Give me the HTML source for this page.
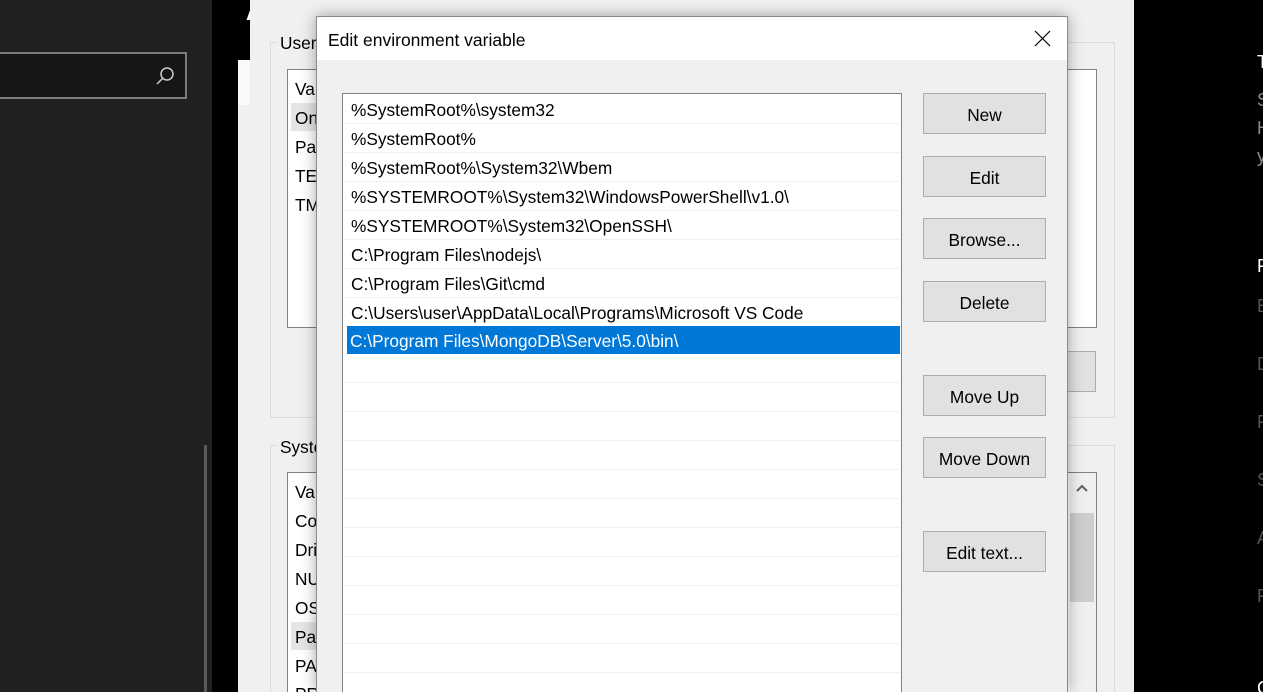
<!DOCTYPE html>
<html><head><meta charset="utf-8"><style>
*{margin:0;padding:0;box-sizing:border-box}
html,body{width:1263px;height:692px;overflow:hidden}
body{background:#000;font-family:"Liberation Sans",sans-serif;position:relative}
.a{position:absolute}
.t{position:absolute;font-size:17.3px;color:#000;white-space:nowrap;line-height:20px}
.btn{position:absolute;left:923px;width:123px;height:41px;background:#e1e1e1;border:1px solid #adadad;font-size:17.3px;text-align:center;line-height:42px;color:#000}
.row{position:absolute;left:344px;width:556px;height:29px;border-bottom:1px solid #f0f0f0;font-size:17.3px;line-height:31px;padding-left:7px;white-space:nowrap;color:#000}
.g{position:absolute;left:1257px;font-size:18px;color:#8a8a8a;white-space:nowrap}
</style></head><body>
<div class="a" style="left:0;top:0;width:212px;height:692px;background:#202020"></div>
<div class="a" style="left:-4px;top:52px;width:191px;height:47px;border:2px solid #7b7b7b;background:#161616"></div>
<svg class="a" style="left:154px;top:64px" width="24" height="24"><circle cx="13" cy="10" r="6" fill="none" stroke="#ccc" stroke-width="1.5"/><line x1="9" y1="14" x2="3" y2="20" stroke="#ccc" stroke-width="1.5"/></svg>
<div class="a" style="left:204px;top:445px;width:3px;height:247px;background:#5a5a5a"></div>
<div class="a" style="left:246px;top:0;font-size:22px;color:#fff;font-weight:bold">A</div>
<div class="a" style="left:250px;top:0;width:884px;height:692px;background:#f0f0f0"></div>
<div class="a" style="left:238px;top:60px;width:12px;height:632px;background:#f0f0f0"></div>
<div class="a" style="left:238px;top:60px;width:12px;height:45px;background:#fafafa"></div>
<div class="a" style="left:270px;top:42px;width:845px;height:376px;border:1px solid #dcdcdc"></div>
<div class="t" style="left:278px;top:33px;background:#f0f0f0;padding:0 2px">User</div>
<div class="a" style="left:287px;top:69px;width:810px;height:259px;background:#fff;border:1px solid #828282"></div>
<div class="a" style="left:291px;top:103px;width:30px;height:28px;background:#e5e5e5"></div>
<div class="t" style="left:295px;top:79px">Var</div>
<div class="t" style="left:295px;top:108px">On</div>
<div class="t" style="left:295px;top:137px">Pat</div>
<div class="t" style="left:295px;top:166px">TEM</div>
<div class="t" style="left:295px;top:195px">TMP</div>
<div class="a" style="left:1000px;top:351px;width:96px;height:41px;background:#e1e1e1;border:1px solid #adadad"></div>
<div class="a" style="left:270px;top:445px;width:845px;height:260px;border:1px solid #dcdcdc"></div>
<div class="t" style="left:278px;top:437px;background:#f0f0f0;padding:0 2px">System</div>
<div class="a" style="left:287px;top:472px;width:810px;height:230px;background:#fff;border:1px solid #828282"></div>
<div class="a" style="left:1070px;top:473px;width:26px;height:220px;background:#f0f0f0"></div>
<div class="a" style="left:1070px;top:513px;width:24px;height:89px;background:#cdcdcd"></div>
<svg class="a" style="left:1075px;top:482px" width="14" height="12"><path d="M2 9 L7 4 L12 9" fill="none" stroke="#606060" stroke-width="2"/></svg>
<div class="a" style="left:291px;top:622px;width:30px;height:28px;background:#e5e5e5"></div>
<div class="t" style="left:295px;top:482px">Var</div>
<div class="t" style="left:295px;top:511px">Com</div>
<div class="t" style="left:295px;top:540px">Dri</div>
<div class="t" style="left:295px;top:569px">NUM</div>
<div class="t" style="left:295px;top:598px">OS</div>
<div class="t" style="left:295px;top:627px">Pat</div>
<div class="t" style="left:295px;top:656px">PAT</div>
<div class="t" style="left:295px;top:684px">PRO</div>
<div class="g" style="top:52px;color:#fff">T</div>
<div class="g" style="top:90px">S</div>
<div class="g" style="top:118px">H</div>
<div class="g" style="top:146px">y</div>
<div class="g" style="top:256px;color:#fff">F</div>
<div class="g" style="top:296px;color:#555">E</div>
<div class="g" style="top:354px;color:#555">D</div>
<div class="g" style="top:412px;color:#555">F</div>
<div class="g" style="top:470px;color:#555">S</div>
<div class="g" style="top:528px;color:#555">A</div>
<div class="g" style="top:586px;color:#555">F</div>
<div class="g" style="top:678px;color:#fff">C</div>
<div class="a" style="left:316px;top:16px;width:752px;height:676px;background:#f0f0f0;border:1px solid #8a8a8a;border-bottom:0;box-shadow:0 0 14px rgba(0,0,0,.35)"></div>
<div class="a" style="left:317px;top:17px;width:750px;height:43px;background:#fff"></div>
<div class="a" style="left:328px;top:30px;font-size:17.5px;color:#000">Edit environment variable</div>
<svg class="a" style="left:1034px;top:30px" width="17" height="17"><path d="M1 1 L16 16 M16 1 L1 16" stroke="#000" stroke-width="1.2"/></svg>
<div class="a" style="left:342px;top:93px;width:560px;height:599px;background:#fff;border:1px solid #828282;border-bottom:0;overflow:hidden">
</div>
<div class="row" style="top:95px">%SystemRoot%\system32</div>
<div class="row" style="top:124px">%SystemRoot%</div>
<div class="row" style="top:153px">%SystemRoot%\System32\Wbem</div>
<div class="row" style="top:182px">%SYSTEMROOT%\System32\WindowsPowerShell\v1.0\</div>
<div class="row" style="top:211px">%SYSTEMROOT%\System32\OpenSSH\</div>
<div class="row" style="top:240px">C:\Program Files\nodejs\</div>
<div class="row" style="top:269px">C:\Program Files\Git\cmd</div>
<div class="row" style="top:298px">C:\Users\user\AppData\Local\Programs\Microsoft VS Code</div>
<div class="row" style="top:326px;left:347px;width:553px;padding-left:3px;background:#0078d7;color:#fff;height:28px;line-height:31px;border:0">C:\Program Files\MongoDB\Server\5.0\bin\</div>
<div class="row" style="top:354px"></div>
<div class="row" style="top:383px"></div>
<div class="row" style="top:412px"></div>
<div class="row" style="top:441px"></div>
<div class="row" style="top:470px"></div>
<div class="row" style="top:499px"></div>
<div class="row" style="top:528px"></div>
<div class="row" style="top:557px"></div>
<div class="row" style="top:586px"></div>
<div class="row" style="top:615px"></div>
<div class="row" style="top:644px;height:29px"></div>
<div class="btn" style="top:93px">New</div>
<div class="btn" style="top:156px">Edit</div>
<div class="btn" style="top:218px">Browse...</div>
<div class="btn" style="top:281px">Delete</div>
<div class="btn" style="top:375px">Move Up</div>
<div class="btn" style="top:437px">Move Down</div>
<div class="btn" style="top:531px">Edit text...</div>
</body></html>
